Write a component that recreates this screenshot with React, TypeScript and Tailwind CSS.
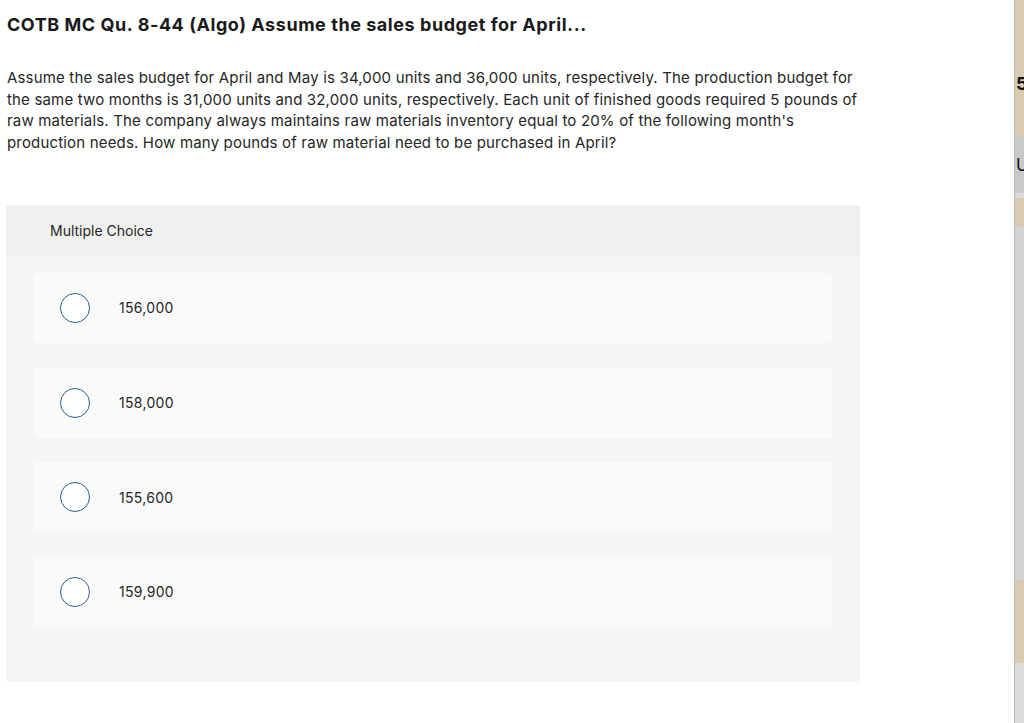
import React from "react";

const options = ["156,000", "158,000", "155,600", "159,900"];

function Radio() {
  return (
    <div className="w-[30px] h-[30px] rounded-full border-[1.5px] border-[#2c5d97] bg-white shrink-0" />
  );
}

export default function App() {
  return (
    <div
      className="w-[1024px] h-[723px] flex bg-white overflow-hidden text-[#1f1f1f]"
      style={{ fontFamily: "Inter, 'Open Sans', sans-serif" }}
    >
      <main className="w-[1014px] shrink-0 flex flex-col">
        <h1 className="pl-[7px] pt-[14px] text-[18px] leading-[22px] font-bold tracking-[0.55px] text-[#1a1a1a] whitespace-nowrap">
          COTB MC Qu. 8-44 (Algo) Assume the sales budget for April...
        </h1>
        <p className="pl-[7px] mt-[31px] w-[900px] text-[15px] leading-[21.7px] tracking-[0.17px] text-[#262626] whitespace-nowrap">
          Assume the sales budget for April and May is 34,000 units and 36,000 units, respectively. The production budget for
          <br />
          the same two months is 31,000 units and 32,000 units, respectively. Each unit of finished goods required 5 pounds of
          <br />
          raw materials. The company always maintains raw materials inventory equal to 20% of the following month's
          <br />
          production needs. How many pounds of raw material need to be purchased in April?
        </p>
        <section className="ml-[6px] mt-[51px] w-[854px] h-[477px] rounded-[4px] bg-[#f5f5f5] overflow-hidden flex flex-col">
          <div className="h-[52px] bg-[#f0f0f0] flex items-center pl-[44px] text-[14px] text-[#262626]">
            Multiple Choice
          </div>
          <div className="flex flex-col gap-[24.7px] pt-[16px] pl-[27px] pr-[28px]">
            {options.map((o) => (
              <div
                key={o}
                className="h-[70px] rounded-[4px] bg-[#fafafa] flex items-center pl-[27px]"
              >
                <Radio />
                <span className="ml-[29px] text-[14px] tracking-[0.3px] text-[#262626]">{o}</span>
              </div>
            ))}
          </div>
        </section>
      </main>
      <aside className="w-[10px] shrink-0 flex flex-col border-l border-[#b9b9b9] text-[#111] text-[18px] leading-none overflow-hidden">
        <div className="h-[137px] bg-[#d8cbb2] flex items-end pb-[44px] pl-[1px] font-bold">5</div>
        <div className="h-[56px] bg-[#c9c9c9] flex items-center pl-[1px] text-[17px]">U</div>
        <div className="h-[5px] bg-[#dadada]" />
        <div className="h-[29px] bg-[#d8cbb2]" />
        <div className="h-[353px] bg-[#d3d3d3]" />
        <div className="h-[83px] bg-[#d8cbb2]" />
        <div className="flex-1 bg-[#dcdcdc]" />
      </aside>
    </div>
  );
}
